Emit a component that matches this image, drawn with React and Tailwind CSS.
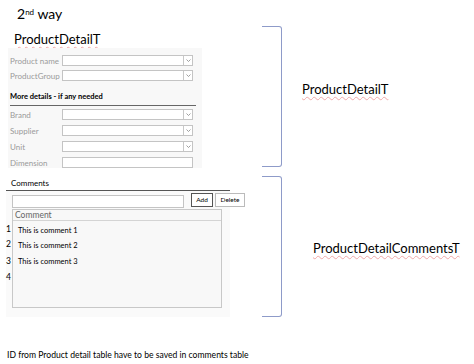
import React from "react";

const Chevron = () => (
  <div className="w-[9px] h-full border-l border-[#c8c8c8] flex items-center justify-center">
    <svg width="5" height="3" viewBox="0 0 5 3"><path d="M0.5 0.5 L2.5 2.5 L4.5 0.5" fill="none" stroke="#888" strokeWidth="0.8" /></svg>
  </div>
);

const Row = ({ label, select = true, className = "" }) => (
  <div className={"flex items-center h-[11px] " + className}>
    <div className="w-[52px] text-[8px] text-[#9a9a9a] leading-none">{label}</div>
    <div className="w-[131px] h-[11px] bg-white border border-[#c4c4c4] flex justify-end">
      {select && <Chevron />}
    </div>
  </div>
);

const Bracket = ({ label, labelClass }) => (
  <div className="flex items-center h-[141px]">
    <div className="w-[20px] h-full border-t border-r border-b border-[#8e9bc9] rounded-r-[3px]" />
    <div className={"text-[13px] text-black underline decoration-wavy decoration-[#f0a8a8] decoration-[0.5px] underline-offset-[2px] " + labelClass}>{label}</div>
  </div>
);

export default function App() {
  return (
    <div className="w-[474px] h-[364px] bg-white overflow-hidden flex" style={{ fontFamily: "Lato, 'Open Sans', sans-serif" }}>
      <div className="w-[262px] shrink-0 flex flex-col">
        <div className="ml-[17px] mt-[5px] h-[18px] text-[14px] leading-[18px] text-black">
          2<sup className="text-[8px]">nd</sup> way
        </div>
        <div className="ml-[14px] mt-[8px] h-[16px] text-[13px] leading-[16px] text-black underline decoration-wavy decoration-[#f0a8a8] decoration-[0.5px] underline-offset-[2px]">ProductDetailT</div>
        <div className="ml-[8px] mt-[1px] w-[194px] h-[120px] bg-[#f8f8f8] pl-[2px] pt-[7px] flex flex-col">
          <Row label="Product name" />
          <Row label="ProductGroup" className="mt-[4px]" />
          <div className="mt-[12px] text-[7.5px] font-bold text-black leading-none">More details - if any needed</div>
          <div className="mt-[4px] w-[186px] h-[2px] bg-[#666]" />
          <Row label="Brand" className="mt-[4px]" />
          <Row label="Supplier" className="mt-[5px]" />
          <Row label="Unit" className="mt-[5px]" />
          <Row label="Dimension" select={false} className="mt-[5px]" />
        </div>
        <div className="ml-[11px] mt-[10px] text-[8px] leading-[10px] text-black">Comments</div>
        <div className="ml-[6px] mt-[2px] w-[224px] h-px bg-[#555]" />
        <div className="ml-[6px] w-[224px] h-[126px] bg-[#fafafa] flex">
          <div className="w-[6px] shrink-0 flex flex-col text-[8.5px] text-black leading-none pt-[34px]">
            <div>1</div>
            <div className="mt-[6px]">2</div>
            <div className="mt-[9px]">3</div>
            <div className="mt-[7px]">4</div>
          </div>
          <div className="flex flex-col shrink-0">
            <div className="flex items-start">
              <div className="mt-[4px] w-[172px] h-[13px] bg-white border border-[#c4c4c4] shrink-0" />
              <div className="ml-[7px] mt-[2px] w-[22px] h-[14px] border border-[#555] bg-white text-[6.5px] flex items-center justify-center shrink-0">Add</div>
              <div className="ml-[2px] mt-[2px] w-[30px] h-[14px] border border-[#bbb] bg-white text-[6.5px] flex items-center justify-center shrink-0">Delete</div>
            </div>
            <div className="mt-[1px] w-[210px] h-[99px] border border-[#c8c8c8] bg-[#f8f8f8] flex flex-col">
              <div className="h-[11px] border-b border-[#d4d4d4] text-[8.5px] text-[#666] leading-[11px] pl-[2px]">Comment</div>
              <div className="pl-[5px] text-[7.5px] text-black leading-none flex flex-col">
                <div className="mt-[6px]">This is comment 1</div>
                <div className="mt-[7px]">This is comment 2</div>
                <div className="mt-[9px]">This is comment 3</div>
              </div>
            </div>
          </div>
        </div>
        <div className="ml-[7px] mt-[34px] text-[8.6px] text-black leading-none">ID from Product detail table have to be saved in comments table</div>
      </div>
      <div className="flex flex-col pt-[26px] gap-[9px]">
        <Bracket label="ProductDetailT" labelClass="ml-[20px] -mt-[13px]" />
        <Bracket label="ProductDetailCommentsT" labelClass="ml-[31px] mt-[5px]" />
      </div>
    </div>
  );
}
